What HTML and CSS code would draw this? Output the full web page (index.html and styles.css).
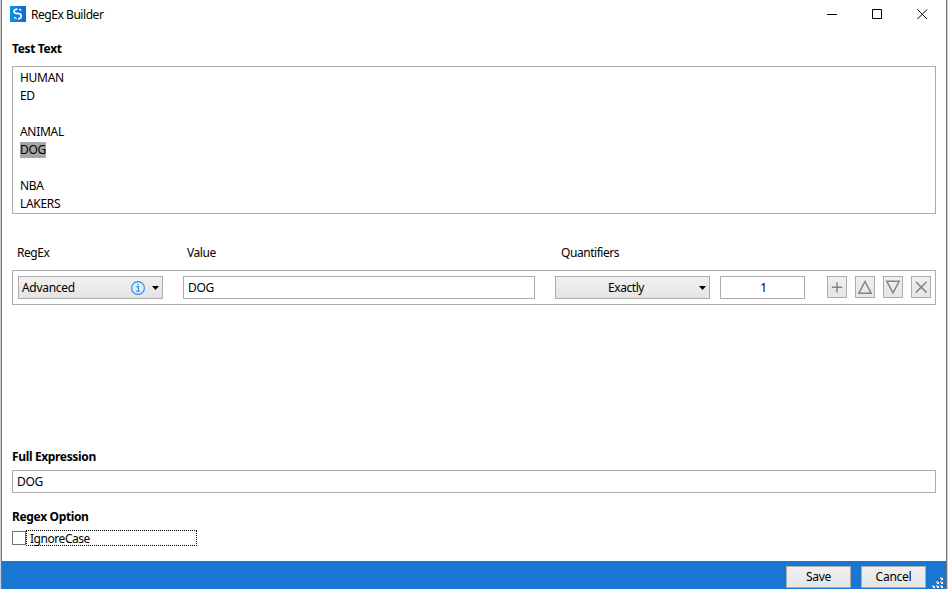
FILE: index.html
```html
<!DOCTYPE html>
<html lang="en">
<head>
    <meta charset="UTF-8">
    <title>RegEx Builder</title>
    <link rel="stylesheet" href="styles.css">
</head>
<body>
<div class="window">
    <header class="title-bar">
        <svg class="app-icon" width="16" height="16" viewBox="0 0 16 16">
            <defs>
                <linearGradient id="logo" x1="0" x2="1">
                    <stop offset="0" stop-color="#0a94ee"/>
                    <stop offset="1" stop-color="#1565d0"/>
                </linearGradient>
            </defs>
            <rect width="16" height="16" fill="url(#logo)"/>
            <g fill="none" stroke="#fff" stroke-width="1.7">
                <path d="M7.4 3.2C3.2 3.2 3.2 7.2 6.2 7.4L8.8 7.7C12.4 8.2 12 12.6 8 12.8"/>
                <path d="M9.2 3.3L11.5 4.4M4.3 11.5L6.6 12.8" stroke-dasharray="1.7 .5"/>
            </g>
        </svg>
        <span class="title">RegEx Builder</span>
        <div class="window-controls">
            <svg width="11" height="11" viewBox="0 0 11 11"><path d="M0 5.5H10"/></svg>
            <svg width="11" height="11" viewBox="0 0 11 11"><path d="M.5 .5H9.5V9.5H.5Z"/></svg>
            <svg width="11" height="11" viewBox="0 0 11 11"><path d="M.5 .5L10 10M10 .5L.5 10"/></svg>
        </div>
    </header>

    <main class="content">
        <h2 class="test-label">Test Text</h2>
        <div class="test-text">HUMAN
ED

ANIMAL
<mark>DOG</mark>

NBA
LAKERS</div>

        <div class="column-labels">
            <span>RegEx</span>
            <span>Value</span>
            <span>Quantifiers</span>
        </div>
        <div class="regex-row">
            <button type="button" class="combo regex-combo">
                <span class="combo-text">Advanced</span>
                <svg class="info" width="14" height="14" viewBox="0 0 14 14">
                    <circle cx="7" cy="7" r="6.4"/>
                    <path d="M5.3 5.6H7.4V10M5 10.2H9.2M6.3 3.4H7.7"/>
                </svg>
                <svg class="arrow" width="7" height="4" viewBox="0 0 7 4"><path d="M0 0H7L3.5 4Z"/></svg>
            </button>
            <input type="text" class="value-input" value="DOG">
            <button type="button" class="combo quantifier-combo">
                <span class="combo-text">Exactly</span>
                <svg class="arrow" width="7" height="4" viewBox="0 0 7 4"><path d="M0 0H7L3.5 4Z"/></svg>
            </button>
            <input type="text" class="count-input" value="1">
            <div class="row-actions">
                <button type="button" class="icon-btn"><svg width="18" height="20" viewBox="0 0 18 20"><path d="M3.8 10.3H14.2M9 5.2V15.4"/></svg></button>
                <button type="button" class="icon-btn"><svg width="18" height="20" viewBox="0 0 18 20"><path d="M9 4.5L15.2 16.3H2.8Z"/></svg></button>
                <button type="button" class="icon-btn"><svg width="18" height="20" viewBox="0 0 18 20"><path d="M2.8 4.3H15.2L9 15.8Z"/></svg></button>
                <button type="button" class="icon-btn"><svg width="18" height="20" viewBox="0 0 18 20"><path d="M3.8 4.8L14.6 15.6M14.6 4.8L3.8 15.6"/></svg></button>
            </div>
        </div>

        <h2 class="expression-label">Full Expression</h2>
        <input type="text" class="expression-input" value="DOG">

        <h2 class="option-label">Regex Option</h2>
        <label class="option">
            <input type="checkbox">
            <span class="option-text">IgnoreCase</span>
        </label>
    </main>

    <footer class="footer">
        <button type="button" class="footer-btn">Save</button>
        <button type="button" class="footer-btn">Cancel</button>
        <svg class="grip" width="12" height="12" viewBox="0 0 12 12">
            <path fill="#fff" d="M9 1h2v2h-2zM5 5h2v2h-2zM9 5h2v2h-2zM1 9h2v2h-2zM5 9h2v2h-2zM9 9h2v2h-2z"/>
            <path fill="#b8b4ae" d="M8 0h2v2h-2zM4 4h2v2h-2zM8 4h2v2h-2zM0 8h2v2h-2zM4 8h2v2h-2zM8 8h2v2h-2z"/>
        </svg>
    </footer>
</div>
</body>
</html>
```
FILE: styles.css
```css
* {
    box-sizing: border-box;
}

body {
    margin: 0;
    height: 589px;
    padding: 0 1px;
    overflow: hidden;
    background-color: #d0d0d0;
    font-family: "Noto Sans", "Open Sans", sans-serif;
    font-size: 12px;
    letter-spacing: -0.45px;
    color: #000;
}

button, input {
    margin: 0;
    font: inherit;
    letter-spacing: inherit;
    color: inherit;
    border: 1px solid #acacac;
    border-radius: 0;
    outline: none;
}

.window {
    height: 589px;
    display: flex;
    flex-direction: column;
    background-color: #fff;
    border: solid #707070;
    border-width: 0 1px;
}

/* Title bar */
.title-bar {
    height: 28px;
    display: flex;
    align-items: center;
    padding: 0 18px 0 8px;
}

.title {
    margin-left: 5px;
}

.window-controls {
    display: flex;
    gap: 34px;
    margin-left: auto;
}

.window-controls svg {
    fill: none;
    stroke: #000;
}

.content {
    flex: 1;
    display: flex;
    flex-direction: column;
    padding: 0 10px;
}

h2 {
    margin: 0;
    height: 18px;
    font-size: 12px;
    font-weight: bold;
    letter-spacing: -0.35px;
    line-height: 18px;
}

.test-label {
    margin: 12px 0 8px;
}

.test-text {
    height: 148px;
    padding: 2px 7px;
    border: 1px solid #acacac;
    letter-spacing: -0.3px;
    line-height: 18px;
    white-space: pre;
    overflow: hidden;
}

mark {
    padding-bottom: 1px;
    background: linear-gradient(#a6a6a6, #a6a6a6) center / 100% 16px no-repeat;
    color: inherit;
}

/* Expression builder */
.column-labels {
    display: grid;
    grid-template-columns: 170px 374px 1fr;
    margin-top: 30px;
    padding-left: 5px;
    line-height: 18px;
}

.regex-row {
    display: flex;
    height: 35px;
    margin-top: 8px;
    padding: 5px 4px 0 5px;
    border: 1px solid #acacac;
}

.combo {
    display: flex;
    align-items: center;
    height: 23px;
    padding: 0 3px;
    background: linear-gradient(#f0f0f0, #e5e5e5);
}

.combo-text {
    flex: 1;
    text-align: left;
}

.arrow {
    fill: #000;
}

.regex-combo {
    width: 145px;
}

.regex-combo .combo-text {
    letter-spacing: -0.3px;
}

.info {
    margin-right: 7px;
    fill: none;
    stroke: #1e88ff;
    stroke-width: 1.1;
}

.value-input {
    width: 352px;
    height: 23px;
    margin: 0 20px;
    padding: 0 4px;
    letter-spacing: -0.3px;
}

.quantifier-combo {
    width: 155px;
}

.quantifier-combo .combo-text {
    padding-right: 6px;
    text-align: center;
}

.count-input {
    width: 85px;
    height: 23px;
    margin-left: 10px;
    padding: 0 1px 0 3px;
    text-align: center;
}

.row-actions {
    display: flex;
    gap: 8px;
    margin-left: auto;
}

.icon-btn {
    width: 20px;
    height: 22px;
    padding: 0;
    background: linear-gradient(#f0f0f0, #e5e5e5);
}

.icon-btn svg {
    display: block;
    fill: none;
    stroke: #858585;
    stroke-width: 1.5;
}

/* Result */
.expression-label {
    margin: 143px 0 4px;
}

.expression-input {
    height: 23px;
    padding: 0 4px;
    letter-spacing: -0.3px;
}

.option-label {
    margin: 15px 0 4px;
}

.option {
    display: flex;
    align-items: flex-start;
}

.option input {
    appearance: none;
    width: 14px;
    height: 14px;
    margin-top: 1px;
    border-color: #707070;
}

.option-text {
    width: 171px;
    height: 16px;
    padding-left: 3px;
    border: 1px dotted #000;
    line-height: 16px;
}

/* Footer */
.footer {
    display: flex;
    gap: 10px;
    justify-content: flex-end;
    height: 28px;
    padding: 5px 2px 0 0;
    background-color: #1976d2;
    letter-spacing: -0.25px;
}

.footer-btn {
    width: 65px;
    height: 22px;
    padding: 0 0 2px;
    background: linear-gradient(#f0f0f0, #e5e5e5);
}

.grip {
    margin: 11px 0 0 -4px;
}
```
